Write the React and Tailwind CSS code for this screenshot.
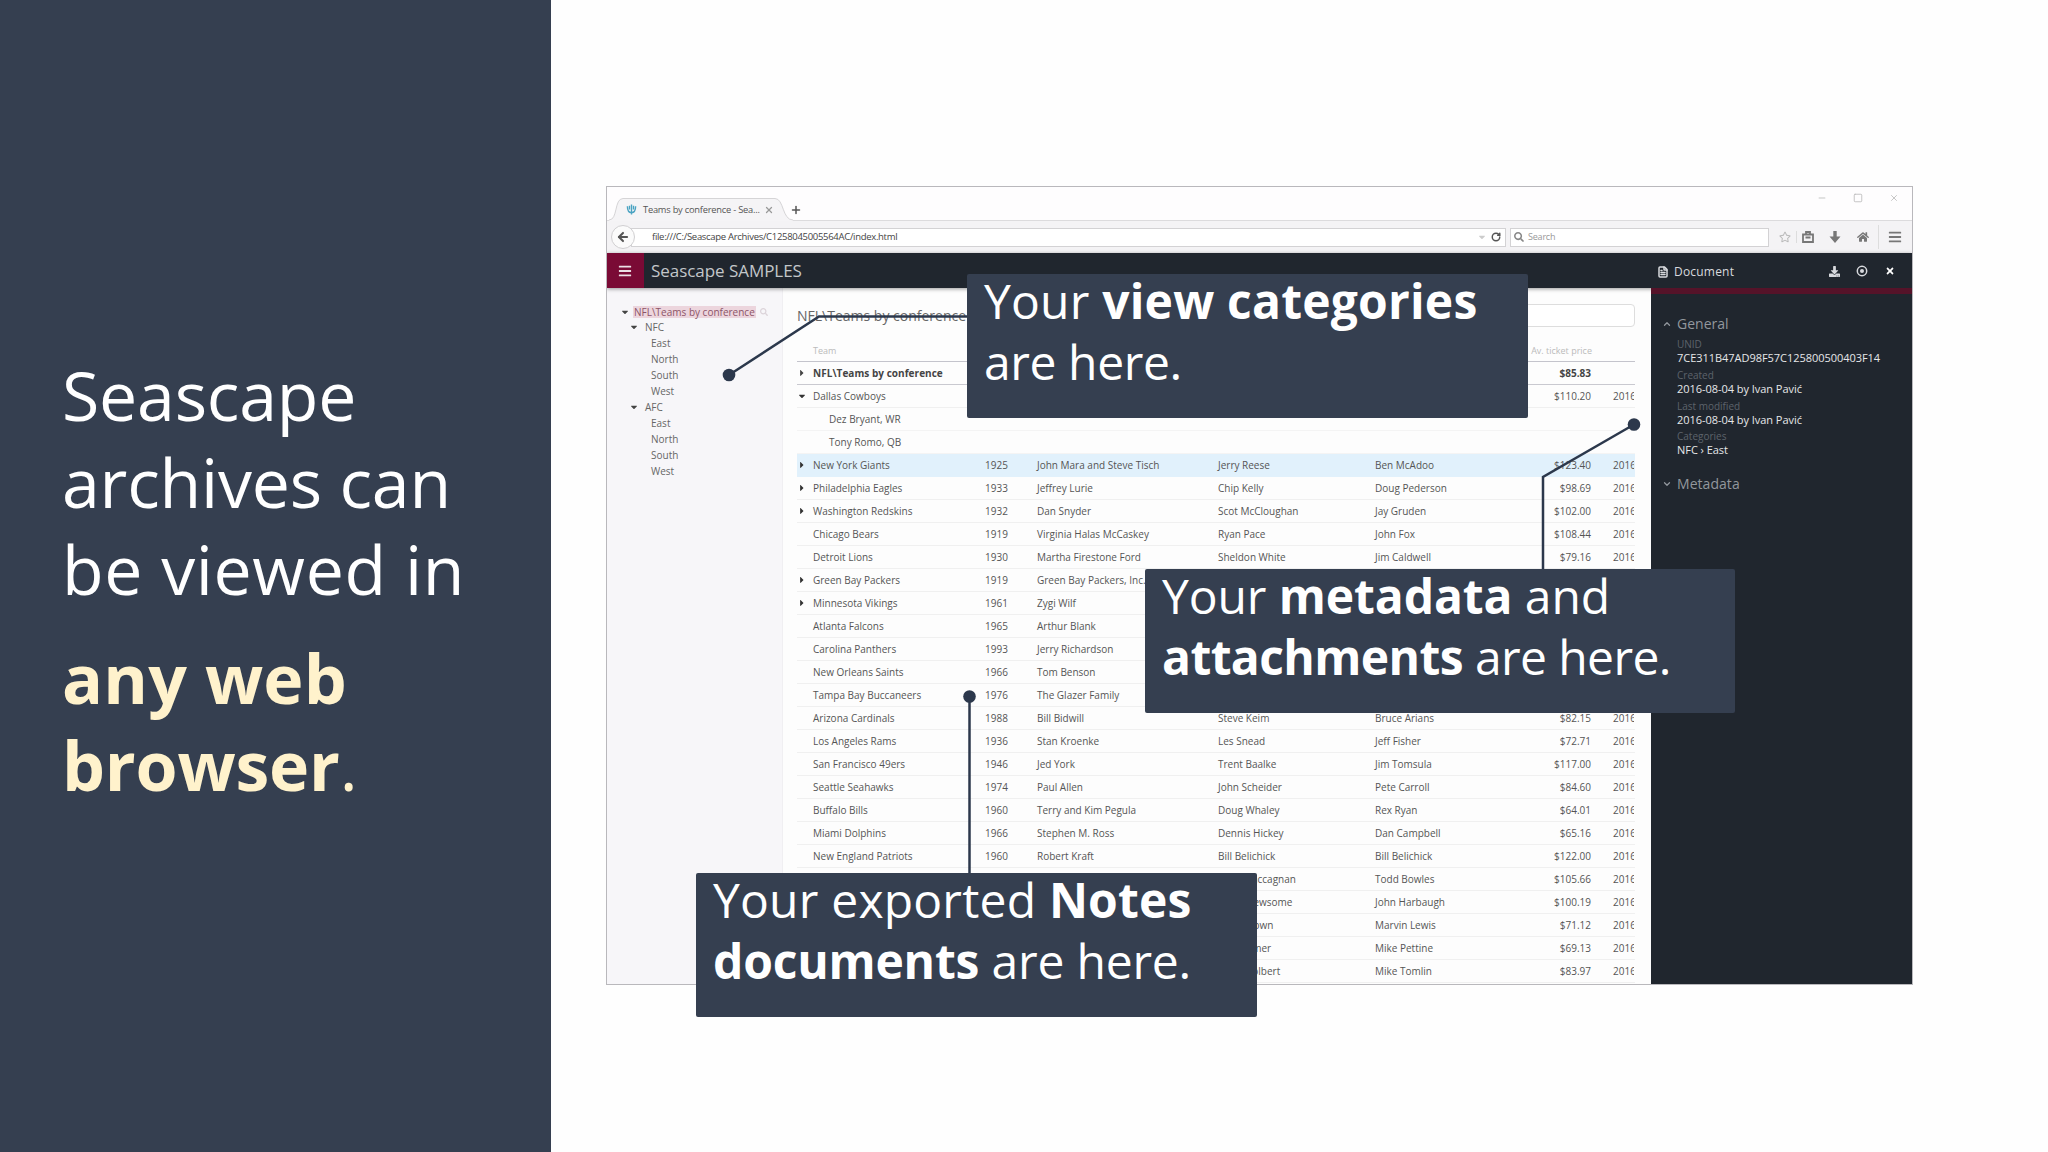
import React from "react";
import {
  FaBars,
  FaSearch,
  FaRegStar,
  FaHome,
  FaDownload,
  FaTimes,
  FaCaretDown,
  FaCaretRight,
} from "react-icons/fa";
import {
  Plus,
  X,
  ArrowLeft,
  RotateCw,
  ChevronUp,
  ChevronDown,
  Minus,
  Square,
  FileText,
} from "lucide-react";

const tree = [
  { label: "NFC", children: ["East", "North", "South", "West"] },
  { label: "AFC", children: ["East", "North", "South", "West"] },
];

// team, founded, owner, general manager, head coach, ticket price, expandable
const teams = [
  ["New York Giants", "1925", "John Mara and Steve Tisch", "Jerry Reese", "Ben McAdoo", "$123.40", true],
  ["Philadelphia Eagles", "1933", "Jeffrey Lurie", "Chip Kelly", "Doug Pederson", "$98.69", true],
  ["Washington Redskins", "1932", "Dan Snyder", "Scot McCloughan", "Jay Gruden", "$102.00", true],
  ["Chicago Bears", "1919", "Virginia Halas McCaskey", "Ryan Pace", "John Fox", "$108.44"],
  ["Detroit Lions", "1930", "Martha Firestone Ford", "Sheldon White", "Jim Caldwell", "$79.16"],
  ["Green Bay Packers", "1919", "Green Bay Packers, Inc.", "", "", "", true],
  ["Minnesota Vikings", "1961", "Zygi Wilf", "", "", "", true],
  ["Atlanta Falcons", "1965", "Arthur Blank", "", "", ""],
  ["Carolina Panthers", "1993", "Jerry Richardson", "", "", ""],
  ["New Orleans Saints", "1966", "Tom Benson", "", "", ""],
  ["Tampa Bay Buccaneers", "1976", "The Glazer Family", "", "", ""],
  ["Arizona Cardinals", "1988", "Bill Bidwill", "Steve Keim", "Bruce Arians", "$82.15"],
  ["Los Angeles Rams", "1936", "Stan Kroenke", "Les Snead", "Jeff Fisher", "$72.71"],
  ["San Francisco 49ers", "1946", "Jed York", "Trent Baalke", "Jim Tomsula", "$117.00"],
  ["Seattle Seahawks", "1974", "Paul Allen", "John Scheider", "Pete Carroll", "$84.60"],
  ["Buffalo Bills", "1960", "Terry and Kim Pegula", "Doug Whaley", "Rex Ryan", "$64.01"],
  ["Miami Dolphins", "1966", "Stephen M. Ross", "Dennis Hickey", "Dan Campbell", "$65.16"],
  ["New England Patriots", "1960", "Robert Kraft", "Bill Belichick", "Bill Belichick", "$122.00"],
  ["", "", "", "Mike Maccagnan", "Todd Bowles", "$105.66"],
  ["", "", "", "Ozzie Newsome", "John Harbaugh", "$100.19"],
  ["", "", "", "Mike Brown", "Marvin Lewis", "$71.12"],
  ["", "", "", "Ray Farmer", "Mike Pettine", "$69.13"],
  ["", "", "", "Kevin Colbert", "Mike Tomlin", "$83.97"],
];

const details = [
  ["UNID", "7CE311B47AD98F57C125800500403F14"],
  ["Created", "2016-08-04 by Ivan Pavić"],
  ["Last modified", "2016-08-04 by Ivan Pavić"],
  ["Categories", "NFC › East"],
];

function Intro() {
  return (
    <aside className="w-[551px] shrink-0 bg-[#353f50] pl-[62px] pt-[351px] text-[68px] leading-[87px] tracking-[-0.2px] text-white">
      <p>
        Seascape
        <br />
        archives can
        <br />
        <span className="tracking-[0.6px]">be viewed in</span>
      </p>
      <p className="mt-[22px] text-[#fff2cc]">
        <b>
          <span className="tracking-[0.2px]">any web</span>
          <br />
          browser
        </b>
        .
      </p>
    </aside>
  );
}

function BrowserChrome() {
  return (
    <div className="text-[#555]">
      {/* Tab strip */}
      <div className="flex h-[34px] items-end border-b border-[#dcdbdd] bg-[#fefdfe]">
        <div className="relative ml-[10px] flex h-[22px] w-[166px] items-center pl-[9px] pt-px text-[9.3px] tracking-[-0.22px]">
          <svg viewBox="0 0 184 23" className="absolute -left-2 top-0 h-[23px] w-[184px]">
            <path d="M0 22C9 22 5 .5 14 .5H166C175 .5 173 22 184 22V23H0Z" fill="#f5f4f6" />
            <path d="M0 22C9 22 5 .5 14 .5H166C175 .5 173 22 184 22" fill="none" stroke="#d5d4d6" />
          </svg>
          <svg viewBox="0 0 12 12" className="relative mr-[6px] h-[11px] w-[11px] shrink-0" fill="none" stroke="#4aa3c2" strokeWidth="1.500">
            <path d="M1.500 2.500c0 5 2 7 4.500 7s4.500-2 4.500-7M6 .5v11M3.800 2v4M8.200 2v4" />
          </svg>
          <span className="relative w-[121px] whitespace-nowrap">Teams by conference - Sea...</span>
          <X className="relative h-2.5 w-2.5 shrink-0 text-[#999]" strokeWidth={3} />
        </div>
        <Plus className="mb-[4px] ml-[7px] h-3 w-3" strokeWidth={3} />
        <div className="mb-[17px] ml-auto mr-[13px] flex items-center gap-[26px] text-[#bbb]">
          <Minus className="h-2.5 w-2.5" />
          <Square className="h-2.5 w-2.5" />
          <X className="h-2.5 w-2.5" />
        </div>
      </div>

      {/* Address bar */}
      <div className="flex h-[32px] items-center bg-[#f4f3f5]">
        <div className="z-10 ml-[4px] flex h-[24px] w-[24px] items-center justify-center rounded-full border border-[#d0cfd1] bg-[#fbfbfb]">
          <ArrowLeft className="h-3.5 w-3.5" strokeWidth={3.500} />
        </div>
        <div className="-ml-1 flex h-[19px] w-[875px] items-center border border-[#d3d2d4] bg-white pl-[20px] pr-[4px]">
          <span className="whitespace-nowrap text-[9.5px] tracking-[-0.3px] text-[#444]">
            file:///C:/Seascape Archives/C1258045005564AC/index.html
          </span>
          <FaCaretDown className="ml-auto mr-[4px] h-2.5 w-2.5 text-[#ccc]" />
          <RotateCw className="h-2.5 w-2.5" strokeWidth={3.500} />
        </div>
        <div className="ml-[4px] flex h-[19px] w-[259px] items-center border border-[#d3d2d4] bg-white pl-[3px]">
          <FaSearch className="mr-1 h-2.5 w-2.5 text-[#888]" />
          <span className="text-[9px] tracking-[-0.2px] text-[#999]">Search</span>
        </div>
        <div className="ml-[10px] flex items-center text-[#777]">
          <FaRegStar className="h-3 w-3 text-[#bbb]" />
          <span className="ml-[5px] h-3 w-px bg-[#ddd]" />
          <svg viewBox="0 0 12 12" className="ml-[5px] h-3 w-3" fill="none" stroke="currentColor" strokeWidth="1.800">
            <path d="M1 3.500H11V11H1ZM4 3V1H8V3M3.500 6.500H8.500" />
          </svg>
          <svg viewBox="0 0 12 12" className="ml-[15px] h-3 w-3" fill="currentColor">
            <path d="M4.300 0H7.700V5.500H11.500L6 12L.5 5.500H4.300Z" />
          </svg>
          <FaHome className="ml-[16px] h-3 w-3" />
          <span className="ml-[9px] h-6 w-px bg-[#ddd]" />
          <FaBars className="ml-[9px] h-3.5 w-3.5" />
        </div>
      </div>
    </div>
  );
}

function AppHeader() {
  return (
    <header className="relative flex h-[35px] shrink-0 items-center bg-[#20262e] shadow-[0_1px_4px_rgba(0,0,0,0.4)]">
      <div className="flex h-full w-[37px] items-center justify-center bg-[#7a0a35] pr-[2px]">
        <FaBars className="h-3.5 w-3.5 text-[#ecdfe5]" />
      </div>
      <h1 className="ml-[7px] pt-px text-[17px] tracking-[-0.05px] text-[#c3c6ca]">Seascape SAMPLES</h1>
      <div className="ml-auto flex h-full w-[261px] items-center pl-[6px] pt-[3px] text-[#d8dade]">
        <FileText className="h-3.5 w-3" strokeWidth={3} />
        <span className="ml-[5px] w-[62px] text-[12px] tracking-[0.2px]">Document</span>
        <FaDownload className="mb-[2px] ml-[93px] h-[11px] w-[11px]" />
        <svg viewBox="0 0 12 12" className="mb-[2px] ml-[16px] h-3 w-3" fill="currentColor">
          <circle cx="6" cy="6" r="4.700" fill="none" stroke="currentColor" strokeWidth="1.500" />
          <circle cx="6" cy="6" r="2" />
        </svg>
        <FaTimes className="mb-[2px] ml-[17px] h-2.5 w-2.5 text-white" />
      </div>
    </header>
  );
}

function CategoryTree() {
  return (
    <nav className="w-[176px] shrink-0 border-r border-[#f0eff2] bg-[#f7f6f9] pl-[13px] pt-[17px] text-[10px] leading-[16px] text-[#666]">
      <div className="flex h-[14px] items-center">
        <FaCaretDown className="mr-[3px] h-2.5 w-2.5 text-[#444]" />
        <span className="whitespace-nowrap bg-[#ecd5dd] px-px leading-[12px] text-[#8c5468]">
          NFL\Teams by conference
        </span>
        <FaSearch className="ml-1 h-2 w-2 text-[#dcd4da]" />
      </div>
      {tree.map((group) => (
        <div key={group.label}>
          <div className="flex items-center">
            <FaCaretDown className="ml-[9px] mr-[6px] h-2.5 w-2.5 text-[#444]" />
            {group.label}
          </div>
          {group.children.map((name) => (
            <div key={name} className="pl-[31px]">{name}</div>
          ))}
        </div>
      ))}
    </nav>
  );
}

function TeamRow({ cells, selected }) {
  const [team, year, owner, manager, coach, price, expandable] = cells;
  return (
    <div
      className={`grid h-[23px] grid-cols-[16px_172px_52px_181px_157px_216px_22px_21px] items-center whitespace-nowrap border-b ${
        selected ? "border-[#e1f1fc] bg-[#e1f1fc]" : "border-[#f0f0f0]"
      }`}
    >
      <span>{expandable && <FaCaretRight className="h-2.5 w-2.5 text-[#333]" />}</span>
      <span>{team}</span>
      <span>{year}</span>
      <span>{owner}</span>
      <span>{manager}</span>
      <span className="flex justify-between">
        <span>{coach}</span>
        <span>{price}</span>
      </span>
      <span />
      <span className="overflow-hidden">{price && "2016"}</span>
    </div>
  );
}

function TeamsView() {
  return (
    <section className="min-w-0 flex-1 bg-[#fdfdfd] pl-[14px] pr-[16px] text-[10px] text-[#555]">
      <div className="flex h-[50px] items-center justify-between pt-[5px]">
        <h2 className="whitespace-nowrap text-[14px] text-[#666]">NFL\Teams by conference</h2>
        <div className="h-[23px] w-[220px] rounded-sm border border-[#ddd] bg-white" />
      </div>
      <div className="flex h-[24px] items-center justify-between border-b border-[#c4c4cc] pl-[16px] pr-[43px] pt-[2px] text-[9px] text-[#bbb]">
        <span>Team</span>
        <span>Av. ticket price</span>
      </div>
      <div className="grid h-[23px] grid-cols-[16px_778px_43px] items-center border-b border-[#c9c9d0] font-bold text-[#444]">
        <FaCaretRight className="h-2.5 w-2.5" />
        <div className="flex justify-between">
          <span className="tracking-[0.04px]">NFL\Teams by conference</span>
          <span>$85.83</span>
        </div>
      </div>
      <div className="grid h-[23px] grid-cols-[16px_778px_22px_21px] items-center border-b border-[#f0f0f0]">
        <FaCaretDown className="h-2.5 w-2.5 text-[#333]" />
        <div className="flex justify-between">
          <span>Dallas Cowboys</span>
          <span>$110.20</span>
        </div>
        <span />
        <span className="overflow-hidden">2016</span>
      </div>
      <div className="flex h-[23px] items-center border-b border-[#f4f4f4] pl-[32px]">Dez Bryant, WR</div>
      <div className="flex h-[23px] items-center border-b border-[#f4f4f4] pl-[32px]">Tony Romo, QB</div>
      {teams.map((cells, i) => (
        <TeamRow key={i} cells={cells} selected={i === 0} />
      ))}
    </section>
  );
}

function DocumentPanel() {
  return (
    <section className="relative w-[261px] shrink-0 border-t-[6px] border-[#551329] bg-[#20262e] pl-[11px] pt-[20px] text-[11px]">
      <h3 className="flex items-center text-[14px] leading-[20px] text-[#92979d]">
        <ChevronUp className="mr-[5px] h-2.5 w-2.5" strokeWidth={3} />
        General
      </h3>
      <dl className="ml-[15px] mt-[4px]">
        {details.map(([label, value]) => (
          <div key={label} className="mb-[4px]">
            <dt className="text-[10px] leading-[13px] text-[#5d636b]">{label}</dt>
            <dd className="whitespace-nowrap leading-[13.800px] tracking-[-0.04px] text-[#e6e7e9]">{value}</dd>
          </div>
        ))}
      </dl>
      <h3 className="mt-[17px] flex items-center text-[14px] leading-[20px] tracking-[0.05px] text-[#92979d]">
        <ChevronDown className="mr-[5px] h-2.5 w-2.5" strokeWidth={3} />
        Metadata
      </h3>
    </section>
  );
}

function BrowserWindow() {
  return (
    <div className="isolate flex h-[799px] w-[1307px] flex-col overflow-hidden border border-[#b9b8bc]">
      <BrowserChrome />
      <AppHeader />
      <div className="flex min-h-0 flex-1">
        <CategoryTree />
        <TeamsView />
        <DocumentPanel />
      </div>
    </div>
  );
}

// Leader lines from the callouts to the parts of the window
function Leaders() {
  return (
    <svg className="absolute inset-0 h-[1152px] w-[2048px]" fill="none" stroke="#2c384c" strokeWidth="2.500">
      <path d="M729 375L819 316.500H967M1634 424.500L1543 477V570M969.500 696V874" />
      <g fill="#2c384c" stroke="none">
        <circle cx="729" cy="375" r="6.300" />
        <circle cx="1634" cy="424.500" r="6.300" />
        <circle cx="969.500" cy="696.500" r="6.300" />
      </g>
    </svg>
  );
}

function Callout({ className, children }) {
  return (
    <div
      className={`absolute h-[144px] whitespace-nowrap rounded-[2px] bg-[#353f50] pl-[17px] text-[48px] leading-[61px] text-white ${className}`}
    >
      <p className="-mt-[4px]">{children}</p>
    </div>
  );
}

function App() {
  return (
    <div className="relative flex h-[1152px] w-[2048px] overflow-hidden bg-[#fefefe] font-['Open_Sans','Noto_Sans',sans-serif]">
      <Intro />
      <main className="pl-[55px] pt-[186px]">
        <BrowserWindow />
      </main>
      <Leaders />
      <Callout className="left-[967px] top-[274px] w-[561px]">
        <span className="tracking-[0.2px]">
          Your <b>view categories</b>
        </span>
        <br />
        <span className="tracking-[-0.4px]">are here.</span>
      </Callout>
      <Callout className="left-[1145px] top-[569px] w-[590px]">
        <span className="tracking-[-0.1px]">
          Your <b>metadata</b> and
        </span>
        <br />
        <span className="tracking-[-0.6px]">
          <b>attachments</b> are here.
        </span>
      </Callout>
      <Callout className="left-[696px] top-[873px] w-[561px]">
        <span className="tracking-[0.2px]">
          Your exported <b>Notes</b>
        </span>
        <br />
        <span className="tracking-[-0.2px]">
          <b>documents</b> are here.
        </span>
      </Callout>
    </div>
  );
}

export default App;
